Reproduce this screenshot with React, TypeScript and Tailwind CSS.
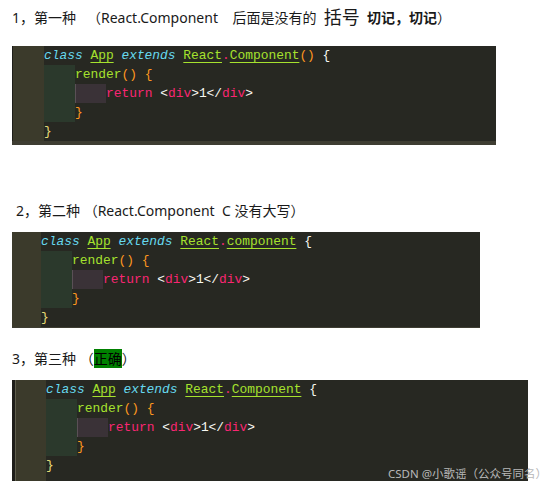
const C = {
  kw: 'text-[#66d9ef] italic',
  cls: 'text-[#a6e22e] underline underline-offset-[3px] decoration-[#a6e22e]',
  fn: 'text-[#a6e22e]',
  pink: 'text-[#f92672]',
  paren: 'text-[#fd971f]',
  plain: 'text-[#f8f8f2]',
  brace: 'text-[#e6db74]',
};

type BlockProps = {
  width: string;
  gutter: React.ReactNode;
  componentName: string;
  parens: boolean;
  footer?: React.ReactNode;
};

function CodeBlock({ width, gutter, componentName, parens, footer }: BlockProps) {
  return (
    <div className={`ml-[12px] ${width} bg-[#272822] font-['Liberation_Mono',monospace] text-[12.9px]`}>
      <div className="flex">
        {gutter}
        <div className="flex-1 flex flex-col">
          {/* line 1 */}
          <div className="h-[19px] flex items-center whitespace-pre">
            <span className={C.kw}>class</span>
            <span> </span>
            <span className={C.cls}>App</span>
            <span> </span>
            <span className={C.kw}>extends</span>
            <span> </span>
            <span className={C.cls}>React</span>
            <span className={C.pink}>.</span>
            <span className={C.cls}>{componentName}</span>
            {parens && <span className={C.paren}>()</span>}
            <span> </span>
            <span className={C.plain}>{'{'}</span>
          </div>
          {/* line 2 */}
          <div className="h-[19px] flex items-stretch whitespace-pre">
            <div className="w-[31px] bg-[#2b392c]" />
            <div className="flex items-center">
              <span className={C.fn}>render</span>
              <span className={C.paren}>()</span>
              <span> </span>
              <span className={C.paren}>{'{'}</span>
            </div>
          </div>
          {/* line 3 */}
          <div className="h-[19px] flex items-stretch whitespace-pre">
            <div className="w-[31px] bg-[#2b392c]" />
            <div className="w-[31px] bg-[#3a3237] border-l border-[#5a5056]" />
            <div className="flex items-center">
              <span className={C.pink}>return</span>
              <span> </span>
              <span className={C.plain}>{'<'}</span>
              <span className={C.pink}>div</span>
              <span className={C.plain}>{'>1</'}</span>
              <span className={C.pink}>div</span>
              <span className={C.plain}>{'>'}</span>
            </div>
          </div>
          {/* line 4 */}
          <div className="h-[19px] flex items-stretch whitespace-pre">
            <div className="w-[31px] bg-[#2b392c]" />
            <div className="flex items-center">
              <span className={C.paren}>{'}'}</span>
            </div>
          </div>
          {/* line 5 */}
          <div className="h-[19px] flex items-center whitespace-pre">
            <span className={C.brace}>{'}'}</span>
          </div>
        </div>
      </div>
      {footer}
    </div>
  );
}

export default function App() {
  const text = "font-['Noto_Sans','Noto_Sans_CJK_SC',sans-serif] text-[14px] text-[#1a1a1a]";
  return (
    <div className="relative w-[555px] h-[490px] bg-white overflow-hidden">
      {/* heading 1 */}
      <div className={`h-[34px] pl-[12px] flex items-center whitespace-pre ${text}`}>
        <span>1，第一种   （React.Component    后面是没有的  </span>
        <span className="text-[18px]">括号</span>
        <span>  </span>
        <span className="font-bold">切记，切记</span>
        <span>）</span>
      </div>

      <div className="mt-[12px]">
        <CodeBlock
          width="w-[484px]"
          componentName="Component"
          parens
          gutter={
            <div className="flex">
              <div className="w-[1px] bg-[#1e1e1a]" />
              <div className="w-[31px] bg-[#3b3a2b]" />
            </div>
          }
          footer={<div className="h-[4px] bg-[#3e3d32]" />}
        />
      </div>

      {/* heading 2 */}
      <div className={`mt-[55px] h-[20px] pl-[16px] flex items-center whitespace-pre ${text}`}>
        <span>2，第二种 （React.Component  C 没有大写）</span>
      </div>

      <div className="mt-[12px]">
        <CodeBlock
          width="w-[468px]"
          componentName="component"
          parens={false}
          gutter={<div className="w-[29px] bg-[#3b3a2b]" />}
          footer={<div className="h-[1px] bg-[#3e3d32]" />}
        />
      </div>

      {/* heading 3 */}
      <div className={`mt-[20px] h-[20px] pl-[12px] flex items-center whitespace-pre ${text}`}>
        <span>3，第三种 （</span>
        <span className="bg-[#008000] text-black leading-[19px]">正确</span>
        <span>）</span>
      </div>

      <div className="mt-[12px]">
        <CodeBlock
          width="w-[516px]"
          componentName="Component"
          parens={false}
          gutter={
            <div className="flex">
              <div className="w-[3px] bg-[#1e1e1a]" />
              <div className="w-[1px] bg-[#5e5d4c]" />
              <div className="w-[30px] bg-[#3b3a2b]" />
            </div>
          }
          footer={
            <div className="flex h-[6px]">
              <div className="w-[3px] bg-[#1e1e1a]" />
              <div className="w-[1px] bg-[#5e5d4c]" />
              <div className="w-[30px] bg-[#3b3a2b]" />
            </div>
          }
        />
      </div>

      {/* watermark */}
      <div className="absolute left-[388px] top-[465px] whitespace-pre font-['Noto_Sans','Noto_Sans_CJK_SC',sans-serif] text-[11.5px] text-[#b8b8b8]">
        CSDN @小歌谣（公众号同名）
      </div>
    </div>
  );
}
